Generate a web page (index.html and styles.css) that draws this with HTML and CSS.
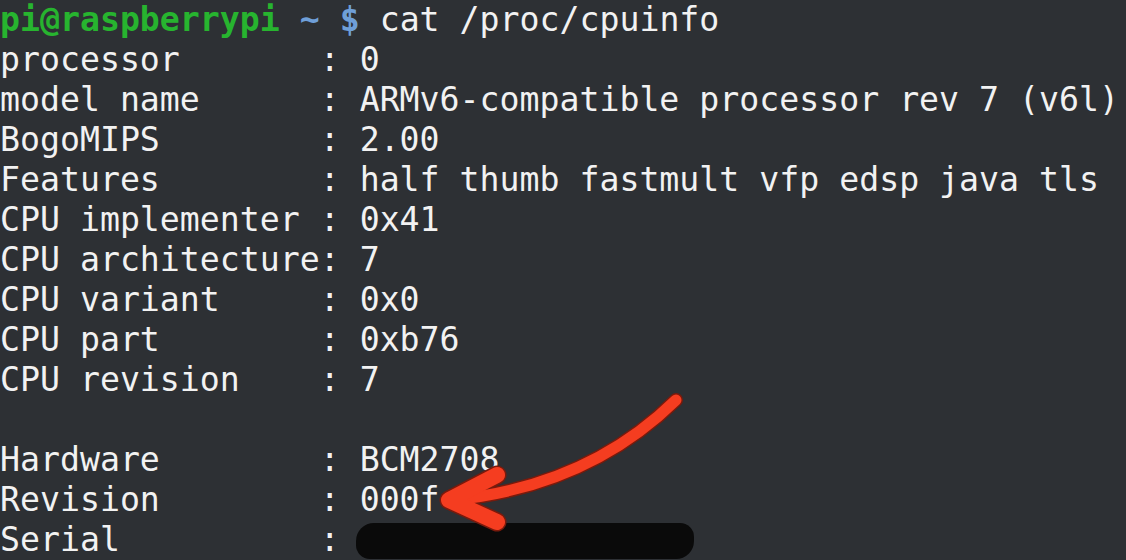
FILE: index.html
```html
<!DOCTYPE html>
<html>
<head>
<meta charset="utf-8">
<link rel="stylesheet" href="styles.css">
</head>
<body>
<div class="term">
<pre class="out"><span class="user">pi@raspberrypi</span> <span class="path">~ $</span> cat /proc/cpuinfo
processor       : 0
model name      : ARMv6-compatible processor rev 7 (v6l)
BogoMIPS        : 2.00
Features        : half thumb fastmult vfp edsp java tls
CPU implementer : 0x41
CPU architecture: 7
CPU variant     : 0x0
CPU part        : 0xb76
CPU revision    : 7

Hardware        : BCM2708
Revision        : 000f
Serial          : <span class="redact"></span></pre>
<svg class="arrow" width="1126" height="560" viewBox="0 0 1126 560">
  <g fill="none" stroke-linecap="round" stroke-linejoin="round">
    <path d="M676 400 C625 450 555 490 452 500" stroke="#7a1a0c" stroke-width="14"/>
    <path d="M497 475 L449 500 L497 522" stroke="#7a1a0c" stroke-width="19"/>
    <path d="M676 400 C625 450 555 490 452 500" stroke="#f53d20" stroke-width="11"/>
    <path d="M497 475 L449 500 L497 522" stroke="#f53d20" stroke-width="16"/>
  </g>
</svg>
</div>
</body>
</html>
```
FILE: styles.css
```css
html, body {
  margin: 0;
  padding: 0;
  background: #2d3034;
}
.term {
  position: relative;
  width: 1126px;
  height: 560px;
  overflow: hidden;
  background: #2d3034;
}
.out {
  margin: 0;
  padding: 0;
  font-family: "DejaVu Sans Mono", monospace;
  font-size: 33.2px;
  line-height: 40px;
  color: #f2f2f2;
  white-space: pre;
}
.user {
  color: #27b42f;
  font-weight: bold;
}
.path {
  color: #6f9fd8;
  font-weight: bold;
}
.redact {
  display: inline-block;
  width: 338px;
  height: 36px;
  background: #0a0a0a;
  border-radius: 18px 14px 18px 14px;
  vertical-align: -8px;
  margin-left: -4px;
}
.arrow {
  position: absolute;
  left: 0;
  top: 0;
  pointer-events: none;
}
```
